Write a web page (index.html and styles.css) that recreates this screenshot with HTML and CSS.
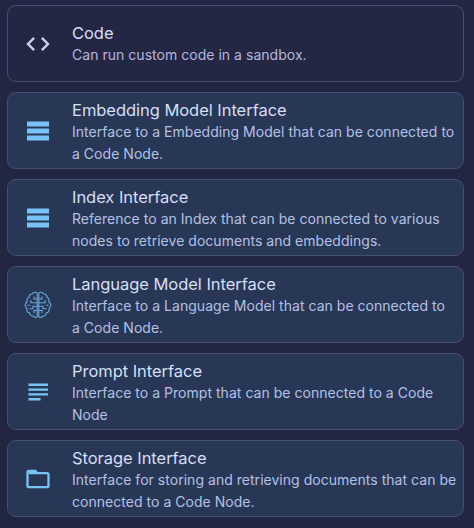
FILE: index.html
```
<!DOCTYPE html>
<html lang="en">
<head>
	<meta charset="utf-8">
	<title>Nodes</title>
	<link rel="stylesheet" href="styles.css">
</head>
<body>
	<ul class="node-list">

		<li class="node node-code">
			<svg class="icon" viewBox="0 0 24 24"><path d="M9.400 16.600 4.800 12l4.600-4.600L8 6l-6 6 6 6 1.400-1.400zm5.200 0 4.600-4.600-4.600-4.600L16 6l6 6-6 6-1.400-1.400z"/></svg>
			<div class="text">
				<h3>Code</h3>
				<p>Can run custom code in a sandbox.</p>
			</div>
		</li>

		<li class="node">
			<svg class="icon" viewBox="0 0 28 28"><path d="M3 4.500h22v5H3zM3 11.500h22v5H3zM3 18.500h22v5H3z"/></svg>
			<div class="text">
				<h3>Embedding Model Interface</h3>
				<p>Interface to a Embedding Model that can be connected to<br>a Code Node.</p>
			</div>
		</li>

		<li class="node">
			<svg class="icon" viewBox="0 0 28 28"><path d="M3 4.500h22v5H3zM3 11.500h22v5H3zM3 18.500h22v5H3z"/></svg>
			<div class="text">
				<h3>Index Interface</h3>
				<p>Reference to an Index that can be connected to various<br>nodes to retrieve documents and embeddings.</p>
			</div>
		</li>

		<li class="node">
			<svg class="icon brain" viewBox="0 0 28 28">
				<path d="M13.200 2.200c-1.600-1.500-4.200-1.200-5 .8-2.200 0-3.600 1.800-3.200 3.600-1.900.7-2.500 2.400-1.800 4.100-2.500 1.500-2.800 5.200-.2 6.800-.6 2.200.6 4.100 2.600 4.400.2 2.200 1.900 3.300 3.600 3 .9 1.700 3 2.100 4 .8z"/>
				<path d="M14.800 2.200c1.600-1.500 4.200-1.200 5 .8 2.200 0 3.600 1.800 3.200 3.600 1.900.7 2.500 2.400 1.800 4.100 2.500 1.500 2.800 5.200.2 6.800.6 2.200-.6 4.100-2.600 4.400-.2 2.200-1.900 3.300-3.600 3-.9 1.700-3 2.100-4 .8z"/>
				<path d="M13 8h-3V5.500M13 11.700H6.800V9M13 15.200H9v2.600H5.500M13 19.500h-3V22M15 8h3V5.500M15 11.700h6.200V9M15 15.200h4v2.600h3.500M15 19.500h3V22M3.500 14.200h2.800M21.700 14.200h2.800"/>
			</svg>
			<div class="text">
				<h3>Language Model Interface</h3>
				<p>Interface to a Language Model that can be connected to<br>a Code Node.</p>
			</div>
		</li>

		<li class="node">
			<svg class="icon" viewBox="0 0 28 28"><path d="M4.500 5.500h19.500v2.400H4.500zM4.500 10.400h19.500v2.400H4.500zM4.500 15.200h19.500v2.400H4.500zM4.500 20h12v2.400h-12z"/></svg>
			<div class="text">
				<h3>Prompt Interface</h3>
				<p>Interface to a Prompt that can be connected to a Code<br>Node</p>
			</div>
		</li>

		<li class="node">
			<svg class="icon" viewBox="0 0 24 24"><path d="M9.170 6l2 2H20v10H4V6h5.170M10 4H4c-1.100 0-1.990.9-1.990 2L2 18c0 1.100.9 2 2 2h16c1.100 0 2-.9 2-2V8c0-1.100-.9-2-2-2h-8l-2-2z"/><path d="M4 5h6l2 2v1H4z"/></svg>
			<div class="text">
				<h3>Storage Interface</h3>
				<p>Interface for storing and retrieving documents that can be<br>connected to a Code Node.</p>
			</div>
		</li>

	</ul>
</body>
</html>
```
FILE: styles.css
```
body {
	margin: 0;
	background: #232643;
	font-family: Inter, "Liberation Sans", sans-serif;
}

.node-list {
	display: flex;
	flex-direction: column;
	gap: 10px;
	width: 457px;
	margin: 0;
	padding: 5px 0 0 7px;
	list-style: none;
}

.node {
	display: flex;
	align-items: center;
	gap: 20px;
	box-sizing: border-box;
	height: 77px;
	padding-left: 16px;
	border: 1px solid #474e70;
	border-radius: 9px;
	background: #283756;
	color: #b3c1e4;
}
.node-code {
	background: #242744;
	color: #b7b5df;
}

.icon {
	flex: none;
	width: 28px;
	height: 28px;
	fill: #77c3f5;
}
.node-code .icon {
	fill: #cfd2f5;
}
.brain {
	fill: none;
	stroke: #68addd;
	stroke-width: 1.1;
}

.text {
	padding-top: 2px;
	white-space: nowrap;
}
.node-code .text {
	padding-top: 0;
}
.text h3 {
	margin: 0;
	color: #d5dff7;
	font-size: 16.5px;
	font-weight: 400;
	line-height: 22px;
	letter-spacing: -.04px;
}
.text p {
	margin: 0;
	font-size: 14px;
	line-height: 21.5px;
	letter-spacing: .03px;
}
```
